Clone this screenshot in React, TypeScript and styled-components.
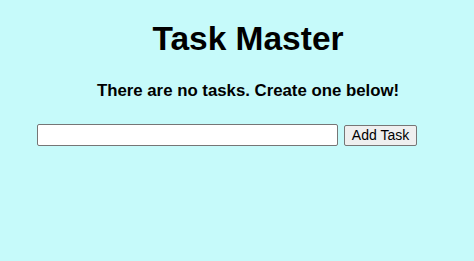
import styled, { createGlobalStyle } from "styled-components";

const GlobalStyle = createGlobalStyle`
  html, body {
    margin: 0;
    background: #c6fafa;
    font-family: "Liberation Sans", Arial, sans-serif;
  }
`;

const Page = styled.div`
  min-height: 261px;
  padding: 20px 20px 0 37px;
  box-sizing: border-box;
`;

const Title = styled.h1`
  margin: 0;
  padding-left: 5px;
  text-align: center;
  font-size: 33.5px;
  font-weight: bold;
  color: #000;
`;

const Message = styled.h3`
  margin: 23px 0 0;
  padding-left: 5px;
  text-align: center;
  font-size: 16.8px;
  font-weight: bold;
  color: #000;
`;

const Form = styled.form`
  display: flex;
  align-items: center;
  gap: 6px;
  margin-top: 23px;
`;

const TaskInput = styled.input`
  width: 301px;
  height: 22px;
  box-sizing: border-box;
  border: 1px solid #767676;
  border-radius: 2px;
  background: #fff;
  padding: 1px 2px;
  font-size: 13px;
`;

const AddButton = styled.button`
  height: 21px;
  width: 73px;
  box-sizing: border-box;
  border: 1px solid #767676;
  border-radius: 2px;
  background: #efefef;
  font-family: "Liberation Sans", Arial, sans-serif;
  font-size: 14px;
  color: #000;
  padding: 0 4px;
`;

export default function App() {
  return (
    <Page>
      <GlobalStyle />
      <Title>Task Master</Title>
      <Message>There are no tasks. Create one below!</Message>
      <Form onSubmit={(e) => e.preventDefault()}>
        <TaskInput type="text" />
        <AddButton type="submit">Add Task</AddButton>
      </Form>
    </Page>
  );
}
